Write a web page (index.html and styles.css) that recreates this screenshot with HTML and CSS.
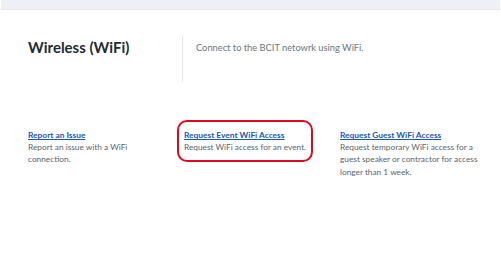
FILE: index.html
```html
<!DOCTYPE html>
<html lang="en">
<head>
    <meta charset="UTF-8">
    <meta name="viewport" content="width=device-width, initial-scale=1.0">
    <title>Wireless (WiFi)</title>
    <link rel="stylesheet" href="styles.css">
</head>
<body>

    <!-- Top band -->
    <div class="top-band"></div>

    <section class="intro">
        <h1 class="intro-title">Wireless (WiFi)</h1>
        <p class="intro-text">Connect to the BCIT netowrk using WiFi.</p>
    </section>

    <section class="links">
        <div class="link-card">
            <a href="#" class="link-title">Report an Issue</a>
            <p class="link-text">Report an issue with a WiFi connection.</p>
        </div>
        <div class="link-card">
            <div class="highlight">
                <a href="#" class="link-title">Request Event WiFi Access</a>
                <p class="link-text">Request WiFi access for an event.</p>
            </div>
        </div>
        <div class="link-card">
            <a href="#" class="link-title">Request Guest WiFi Access</a>
            <p class="link-text">Request temporary WiFi access for a guest speaker or contractor for access longer than 1 week.</p>
        </div>
    </section>

</body>
</html>
```

FILE: styles.css
```css
body {
    margin: 0;
    font-family: Lato, "Noto Sans", sans-serif;
    background-color: #fff;
    color: #5f6b78;
}
.top-band {
    height: 9px;
    margin: 0 1px;
    background-color: #eef0f8;
    border-bottom: 1px solid #e3e7ef;
}
.intro {
    display: flex;
    padding: 25px 0 0 28px;
}
.intro-title {
    width: 154px;
    margin: 0;
    padding-top: 1px;
    font-size: 15px;
    font-weight: bold;
    color: #222b36;
    line-height: 22px;
}
.intro-text {
    margin: 0;
    height: 41px;
    padding: 6px 0 0 13px;
    border-left: 1px solid #e4e8ec;
    font-size: 9.3px;
    line-height: 14px;
    color: #6b7684;
}
.links {
    display: grid;
    grid-template-columns: repeat(3, 142px);
    column-gap: 14px;
    padding: 47px 0 0 28px;
}
.link-title {
    display: block;
    font-size: 8.4px;
    font-weight: bold;
    color: #1a56b8;
    line-height: 12px;
}
.link-text {
    margin: 0;
    font-size: 8.3px;
    line-height: 12.3px;
    color: #5c6570;
}

/* Red annotation box around the event card */
.highlight {
    display: inline-block;
    position: relative;
}
.highlight::after {
    content: "";
    position: absolute;
    top: -9px;
    bottom: -9px;
    left: -7px;
    right: -7px;
    border: 2px solid #e0081c;
    border-radius: 10px;
}
```
